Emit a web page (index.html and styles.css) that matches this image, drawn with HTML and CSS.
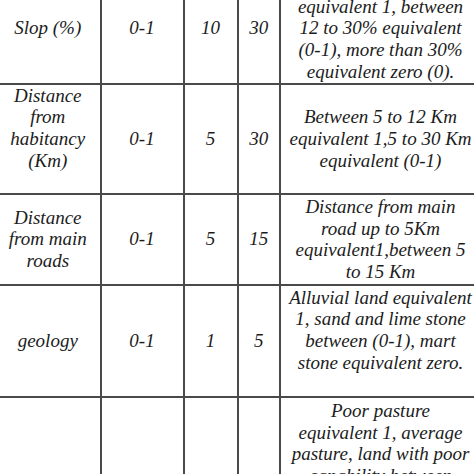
FILE: index.html
```html
<!DOCTYPE html>
<html>
<head>
<meta charset="utf-8">
<link rel="stylesheet" href="styles.css">
</head>
<body>
<div class="frame">
<table class="grid">
<colgroup>
<col class="c-factor"><col class="c-range"><col class="c-min"><col class="c-max"><col class="c-desc">
</colgroup>
<tr class="r1">
<td>Slop (%)</td><td>0-1</td><td>10</td><td>30</td>
<td>Less than 12% slop<br>equivalent 1, between<br>12 to 30% equivalent<br>(0-1), more than 30%<br>equivalent zero (0).</td>
</tr>
<tr class="r2">
<td class="trail">Distance<br>from<br>habitancy<br>(Km)</td><td>0-1</td><td>5</td><td>30</td>
<td>Between 5 to 12 Km<br>equivalent 1,5 to 30 Km<br>equivalent (0-1)</td>
</tr>
<tr class="r3">
<td>Distance<br>from main<br>roads</td><td>0-1</td><td>5</td><td>15</td>
<td>Distance from main<br>road up to 5Km<br>equivalent1,between 5<br>to 15 Km</td>
</tr>
<tr class="r4">
<td>geology</td><td>0-1</td><td>1</td><td>5</td>
<td class="trail">Alluvial land equivalent<br>1, sand and lime stone<br>between (0-1), mart<br>stone equivalent zero.</td>
</tr>
<tr class="r5">
<td></td><td></td><td></td><td></td>
<td class="top">Poor pasture<br>equivalent 1, average<br>pasture, land with poor<br>capability between<br>(0-1), good pasture<br>equivalent zero (0).</td>
</tr>
</table>
</div>
</body>
</html>
```
FILE: styles.css
```css
body {
  margin: 0;
  background: #ffffff;
}
.frame {
  width: 474px;
  height: 474px;
  overflow: hidden;
}
.grid {
  border-collapse: collapse;
  table-layout: fixed;
  width: 486px;
  margin: -28px 0 0 -6px;
}
.c-factor { width: 105.5px; }
.c-range { width: 83px; }
.c-min { width: 54px; }
.c-max { width: 42.5px; }
.c-desc { width: 201px; }
.grid td {
  border: 2px solid #4a4a4a;
  padding: 0;
  text-align: center;
  vertical-align: middle;
  white-space: nowrap;
  font-family: "Liberation Serif", "Times New Roman", serif;
  font-style: italic;
  font-size: 19px;
  line-height: 21.7px;
  color: #1c1c1c;
}
.grid td.trail { padding-bottom: 21.7px; }
.grid td.top { vertical-align: top; padding-top: 2px; }
.r1 { height: 110px; }
.r2 { height: 110.5px; }
.r3 { height: 90.5px; }
.r4 { height: 112.5px; }
.r5 { height: 160px; }
```
